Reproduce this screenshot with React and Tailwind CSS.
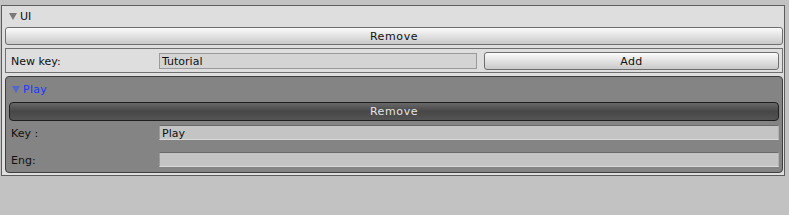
import React from "react";

const font = { fontFamily: '"DejaVu Sans", Verdana, sans-serif' };

function Tri({ color }) {
  return (
    <svg width="8" height="7" viewBox="0 0 8 7" className="shrink-0">
      <polygon points="0,0 8,0 4,7" fill={color} />
    </svg>
  );
}

export default function App() {
  return (
    <div className="w-[789px] h-[215px] bg-[#c2c2c2] pt-[5px] pl-[1px] text-[11px] text-[#111]" style={font}>
      <div className="w-[784px] border border-[#5c5c5c] bg-[#dedede] pl-[3px] pr-[1px] pb-[2px] flex flex-col">
        <div className="h-[21px] flex items-center pl-[4px] gap-[3px]">
          <Tri color="#7a7a7a" />
          <span className="leading-none">UI</span>
        </div>
        <div className="h-[18px] rounded-[3px] border border-[#6e6e6e] bg-gradient-to-b from-[#fbfbfb] to-[#c9c9c9] flex items-center justify-center tracking-[0.6px] leading-none pt-[1px]">
          Remove
        </div>
        <div className="mt-[3px] h-[25px] border border-[#707070] flex items-center pl-[5px] pr-[3px]">
          <span className="w-[148px] shrink-0 leading-none pt-[2px]">New key:</span>
          <div className="w-[318px] h-[16px] border border-[#9a9a9a] bg-[#d4d4d4] flex items-center pl-[2px] pt-[1px] leading-none">
            Tutorial
          </div>
          <div className="ml-[7px] flex-1 h-[18px] rounded-[3px] border border-[#6e6e6e] bg-gradient-to-b from-[#fbfbfb] to-[#c9c9c9] flex items-center justify-center tracking-[0.4px] leading-none pt-[1px]">
            Add
          </div>
        </div>
        <div className="mt-[3px] h-[97px] rounded-[4px] border border-[#3e3e3e] bg-[#848484] px-[3px] flex flex-col">
          <div className="h-[25px] shrink-0 flex items-center pl-[3px] gap-[3px]">
            <Tri color="#5566cc" />
            <span className="text-[#1838ff] leading-none tracking-[0.3px]">Play</span>
          </div>
          <div className="h-[19px] shrink-0 rounded-[4px] border border-[#1e1e1e] bg-gradient-to-b from-[#686868] via-[#474747] to-[#545454] flex items-center justify-center text-[#e4e4e4] tracking-[0.6px] leading-none">
            Remove
          </div>
          <div className="mt-[4px] h-[15px] shrink-0 flex items-center">
            <span className="w-[150px] shrink-0 pl-[2px] leading-none pt-[2px]">Key :</span>
            <div className="flex-1 h-[15px] border-t border-l border-t-[#6a6a6a] border-l-[#9a9a9a] border-b border-r border-b-[#dadada] border-r-[#b0b0b0] bg-[#c4c4c4] flex items-center pl-[2px] pt-[1px] leading-none">
              Play
            </div>
          </div>
          <div className="mt-[12px] h-[15px] shrink-0 flex items-center">
            <span className="w-[150px] shrink-0 pl-[2px] leading-none pt-[2px]">Eng:</span>
            <div className="flex-1 h-[15px] border-t border-l border-t-[#6a6a6a] border-l-[#9a9a9a] border-b border-r border-b-[#dadada] border-r-[#b0b0b0] bg-[#c4c4c4]"></div>
          </div>
        </div>
      </div>
    </div>
  );
}
